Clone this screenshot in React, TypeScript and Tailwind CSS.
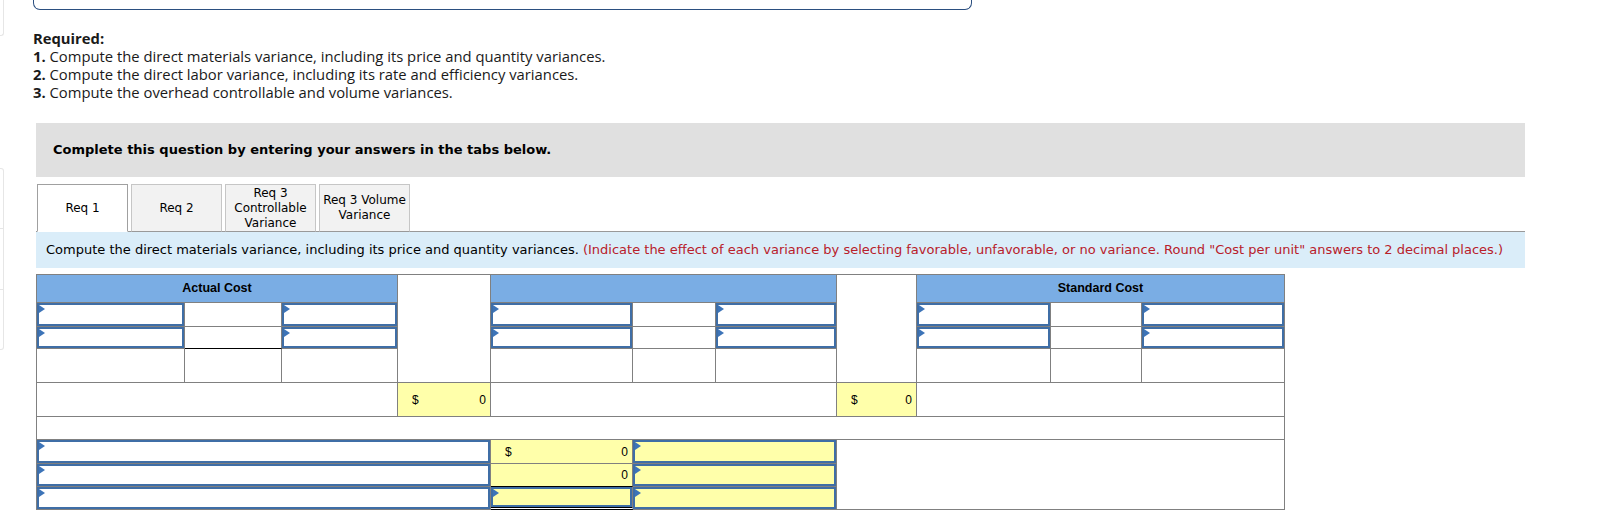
import React from 'react'

const GRID = '#808080'

function Tri() {
  return (
    <span className="absolute top-0 left-0 w-0 h-0 border-y-[4px] border-y-transparent border-l-[6px] border-l-[#3d74b8]" />
  )
}

function Input({ yellow = false, under = '' }: { yellow?: boolean; under?: string }) {
  return (
    <div className={`border-r border-b border-[#808080] ${under}`}>
      <div className={`relative h-full border-2 border-[#3f6ea6] ${yellow ? 'bg-[#ffffaa]' : 'bg-white'}`}>
        <Tri />
      </div>
    </div>
  )
}

function Cell({ className = '', children }: { className?: string; children?: React.ReactNode }) {
  return <div className={`border-r border-b border-[#808080] ${className}`}>{children}</div>
}

function Money({ dollar = true, className = '' }: { dollar?: boolean; className?: string }) {
  return (
    <div className={`flex items-center justify-between bg-[#ffffaa] border-r border-b border-[#808080] pl-[14px] pr-[4px] text-[12px] text-black ${className}`}>
      <span>{dollar ? '$' : ''}</span>
      <span>0</span>
    </div>
  )
}

function Tab({ active = false, children }: { active?: boolean; children: React.ReactNode }) {
  return (
    <div
      className={`-mb-px flex h-[48px] w-[91px] items-center justify-center text-center leading-[15px] border ${
        active ? 'bg-white border-[#a0a0a0] border-b-white' : 'bg-[#f2f2f2] border-[#c6c6c6] border-b-[#999999]'
      }`}
    >
      {children}
    </div>
  )
}

export default function App() {
  return (
    <div className="flex h-[518px] w-[1607px] overflow-hidden bg-white">
      {/* sidebar edges peeking in from the left */}
      <div className="w-[4px] shrink-0">
        <div className="h-[36px] border-r border-b border-[#e6e6e6] rounded-br-[3px]" />
        <div className="mt-[132px] h-[182px] border-y border-r border-[#e6e6e6] rounded-r-[3px] flex flex-col">
          <div className="h-[60px] border-b border-[#e6e6e6]" />
          <div className="h-[61px] border-b border-[#e6e6e6]" />
        </div>
      </div>

      <div className="pl-[29px] flex flex-col">
        <div className="h-[10px] w-[939px] border-[1.5px] border-t-0 border-[#2b4f80] rounded-b-[7px]" />

        <div className="mt-[19px] text-[14.8px] leading-[18px] text-[#1a1a1a]" style={{ fontFamily: '"Open Sans", Lato, sans-serif' }}>
          <div className="font-bold">Required:</div>
          <div><b>1.</b> Compute the direct materials variance, including its price and quantity variances.</div>
          <div><b>2.</b> Compute the direct labor variance, including its rate and efficiency variances.</div>
          <div><b>3.</b> Compute the overhead controllable and volume variances.</div>
        </div>

        <div className="ml-[3px]" style={{ fontFamily: '"DejaVu Sans", Verdana, sans-serif' }}>
          <div className="mt-[22px] flex h-[54px] w-[1489px] items-center bg-[#e0e0e0] pl-[17px] text-[13px] font-bold text-black">
            Complete this question by entering your answers in the tabs below.
          </div>

          <div className="mt-[7px] flex w-[1489px] gap-[3px] border-b border-[#999999] pl-[1px] text-[12px] text-black">
            <Tab active>Req 1</Tab>
            <Tab>Req 2</Tab>
            <Tab>
              Req 3<br />Controllable<br />Variance
            </Tab>
            <Tab>
              Req 3 Volume<br />Variance
            </Tab>
          </div>

          <div className="flex h-[36px] w-[1489px] items-center bg-[#daedf9] pl-[10px] text-[13px] text-black whitespace-nowrap">
            Compute the direct materials variance, including its price and quantity variances.&nbsp;
            <span className="text-[#b8202a]">
              (Indicate the effect of each variance by selecting favorable, unfavorable, or no variance. Round "Cost per unit" answers to 2 decimal places.)
            </span>
          </div>

          <div
            className="mt-[6px] grid w-[1249px] grid-cols-[148px_97px_116px_93px_142px_83px_121px_80px_134px_91px_143px] grid-rows-[28px_24px_22px_34px_34px_23px_24px_23px_23px] border-l border-t border-[#808080] text-black"
            style={{ fontFamily: '"Liberation Sans", Arial, sans-serif', borderColor: GRID }}
          >
            {/* header */}
            <Cell className="col-span-3 flex items-center justify-center bg-[#7aade4] text-[12.5px] font-bold">Actual Cost</Cell>
            <Cell className="row-span-4" />
            <Cell className="col-span-3 bg-[#7aade4]" />
            <Cell className="row-span-4" />
            <Cell className="col-span-3 flex items-center justify-center bg-[#7aade4] text-[12.5px] font-bold">Standard Cost</Cell>

            {/* row 1 */}
            <Input />
            <Cell />
            <Input />
            <Input />
            <Cell />
            <Input />
            <Input />
            <Cell />
            <Input />

            {/* row 2 */}
            <Input />
            <Cell className="border-b-black" />
            <Input />
            <Input />
            <Cell />
            <Input />
            <Input />
            <Cell />
            <Input />

            {/* row 3 */}
            <Cell />
            <Cell />
            <Cell />
            <Cell />
            <Cell />
            <Cell />
            <Cell />
            <Cell />
            <Cell />

            {/* row 4 */}
            <Cell className="col-span-3" />
            <Money />
            <Cell className="col-span-3" />
            <Money />
            <Cell className="col-span-3" />

            {/* row 5 */}
            <Cell className="col-span-11" />

            {/* row 6 */}
            <div className="col-span-4 border-r border-b border-[#808080]">
              <div className="relative h-full border-2 border-[#3f6ea6] bg-white"><Tri /></div>
            </div>
            <Money />
            <div className="col-span-2 border-r border-b border-[#808080]">
              <div className="relative h-full border-2 border-[#3f6ea6] bg-[#ffffaa]"><Tri /></div>
            </div>
            <Cell className="col-span-4 row-span-3" />

            {/* row 7 */}
            <div className="col-span-4 border-r border-b border-[#808080]">
              <div className="relative h-full border-2 border-[#3f6ea6] bg-white"><Tri /></div>
            </div>
            <Money dollar={false} className="border-b-black" />
            <div className="col-span-2 border-r border-b border-[#808080]">
              <div className="relative h-full border-2 border-[#3f6ea6] bg-[#ffffaa]"><Tri /></div>
            </div>

            {/* row 8 */}
            <div className="col-span-4 border-r border-b border-[#808080]">
              <div className="relative h-full border-2 border-[#3f6ea6] bg-white"><Tri /></div>
            </div>
            <Input yellow under="border-b-[3px] border-double border-b-black" />
            <div className="col-span-2 border-r border-b border-[#808080]">
              <div className="relative h-full border-2 border-[#3f6ea6] bg-[#ffffaa]"><Tri /></div>
            </div>
          </div>
        </div>
      </div>
    </div>
  )
}
